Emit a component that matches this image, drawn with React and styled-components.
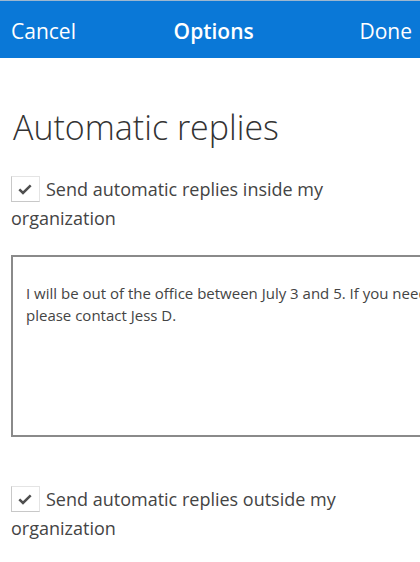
import React from 'react';
import styled, { createGlobalStyle } from 'styled-components';

const GlobalStyle = createGlobalStyle`
    body {
        margin: 0;
        background: #fff;
        font-family: "Open Sans", "Noto Sans", sans-serif;
        overflow: hidden;
    }
`;

const Page = styled.div`
    width: 420px;
    height: 562px;
    overflow: hidden;
`;

const Header = styled.header`
    height: 58px;
    box-sizing: border-box;
    border-top: 1px solid #9db7cf;
    background: #0a78d7;
    display: flex;
    align-items: center;
    justify-content: space-between;
    padding: 3px 8px 0 11px;
    color: #fff;
    font-size: 21px;
`;

const HeaderButton = styled.span`
    font-weight: 400;
`;

const HeaderTitle = styled.span`
    font-weight: 600;
    margin-left: -8px;
`;

const Content = styled.main`
    padding: 0 0 0 11px;
`;

const Title = styled.h1`
    margin: 45px 0 0 2px;
    font-size: 34px;
    font-weight: 300;
    line-height: 48px;
    color: #333;
`;

const Option = styled.div`
    margin-top: ${props => props.$top}px;
    font-size: 18px;
    line-height: 29px;
    color: #444;
`;

const Box = styled.span`
    float: left;
    display: flex;
    align-items: center;
    justify-content: center;
    width: 27px;
    height: 24px;
    margin: 1px 6px 0 0;
    border: 1px solid #c8c8c8;
    border-top-color: #e4e4e4;
    border-right-color: #e4e4e4;

    svg {
        display: block;
        margin-left: -2px;
    }
`;

const Reply = styled.div`
    margin-top: 22px;
    width: 460px;
    height: 182px;
    box-sizing: border-box;
    border: 2px solid #8a8a8a;
    padding: 25px 13px;
    font-size: 15px;
    line-height: 22px;
    color: #444;
`;

const Line = styled.div`
    white-space: nowrap;
`;

const Check = () => (
    <svg width="14" height="11" viewBox="0 0 14 11">
        <path d="M1.3 5.3 L5 9 L12.7 1.3" fill="none" stroke="#4f4f4f" strokeWidth="2.5" />
    </svg>
);

const CheckOption = props => (
    <Option $top={props.top}>
        <Box><Check /></Box>
        {props.children}
    </Option>
);

export default function App() {
    return (
        <Page>
            <GlobalStyle />
            <Header>
                <HeaderButton>Cancel</HeaderButton>
                <HeaderTitle>Options</HeaderTitle>
                <HeaderButton>Done</HeaderButton>
            </Header>
            <Content>
                <Title>Automatic replies</Title>
                <CheckOption top={24}>Send automatic replies inside my organization</CheckOption>
                <Reply>
                    <Line>I will be out of the office between July 3 and 5. If you need help,</Line>
                    <Line>please contact Jess D.</Line>
                </Reply>
                <CheckOption top={48}>Send automatic replies outside my organization</CheckOption>
            </Content>
        </Page>
    );
}
